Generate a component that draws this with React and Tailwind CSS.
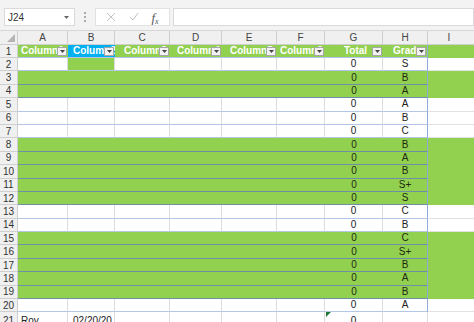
const cols = [
  { key: "A", w: "w-[50px]", pl: "pl-[3px]", label: "Column1" },
  { key: "B", w: "w-[47px]", pl: "pl-[5px]", label: "Column2" },
  { key: "C", w: "w-[55px]", pl: "pl-[9px]", label: "Column3" },
  { key: "D", w: "w-[52px]", pl: "pl-[7px]", label: "Column4" },
  { key: "E", w: "w-[55px]", pl: "pl-[8px]", label: "Column5" },
  { key: "F", w: "w-[48px]", pl: "pl-[3px]", label: "Column6" },
  { key: "G", w: "w-[58px]", pl: "pl-[19px]", label: "Total" },
  { key: "H", w: "w-[45px]", pl: "pl-[10px]", label: "Grade" },
];

const grades = ["S", "B", "A", "A", "B", "C", "B", "A", "B", "S+", "S", "C", "B", "C", "S+", "B", "A", "B", "A"];
const greenRows = [3, 4, 8, 9, 10, 11, 12, 15, 16, 17, 18, 19];

const FilterBtn = () => (
  <div className="absolute right-[1px] top-[2px] w-[10px] h-[9px] bg-[#f2f2f2] border border-[#a6a6a6] flex items-center justify-center">
    <svg width="5" height="3" viewBox="0 0 5 3">
      <path d="M0 0 L5 0 L2.5 3 Z" fill="#444" />
    </svg>
  </div>
);

const HeaderRow = () => (
  <div className="flex h-[13px]">
    <div className="w-[18px] shrink-0 bg-[#f0f0f0] border-r border-b border-[#cfcfcf] flex items-center justify-center text-[#333]">1</div>
    {cols.map((c) => (
      <div
        key={c.key}
        className={`${c.w} shrink-0 relative overflow-hidden border-b border-[#b4c6e7] ${c.key === "B" ? "bg-[#00b0f0]" : "bg-[#92d050]"} ${c.key === "H" ? "border-r border-r-[#8eaadb]" : ""}`}
      >
        <div className={`${c.pl} pr-[12px] whitespace-nowrap overflow-hidden text-white font-bold leading-[12px]`}>{c.label}</div>
        <FilterBtn />
      </div>
    ))}
    <div className="flex-1 bg-[#92d050]" />
  </div>
);

const DataRow = ({ n }) => {
  const green = greenRows.includes(n);
  const line = green ? "border-b-[#6f8fa6]" : "border-b-[#b4c6e7]";
  return (
    <div className="flex h-[13.4px]">
      <div className="w-[18px] shrink-0 bg-[#f0f0f0] border-r border-b border-[#cfcfcf] flex items-center justify-center text-[#333]">{n}</div>
      {cols.map((c) => {
        const fill = green || (n === 2 && c.key === "B") ? "bg-[#92d050]" : "bg-white";
        const vline = green ? "" : c.key === "H" ? "" : "border-r border-r-[#dcdcdc]";
        return (
          <div
            key={c.key}
            className={`${c.w} shrink-0 border-b ${line} ${fill} ${vline} ${c.key === "H" ? "border-r border-r-[#8eaadb]" : ""} flex items-center justify-center leading-none ${green ? "text-[#1e2a10]" : "text-[#222]"}`}
          >
            {c.key === "G" ? "0" : c.key === "H" ? grades[n - 2] : ""}
          </div>
        );
      })}
      <div className={`flex-1 ${green ? "bg-[#92d050]" : "bg-white border-b border-[#e2e2e2]"}`} />
    </div>
  );
};

const App = () => {
  return (
    <div className="w-[474px] h-[322px] overflow-hidden bg-white text-[10px] select-none" style={{ fontFamily: '"Liberation Sans", Arial, sans-serif' }}>
      {/* formula bar */}
      <div className="h-[31px] bg-[#f3f3f3] flex items-start pt-[8px] border-b border-[#d6d6d6]">
        <div className="ml-[4px] w-[71px] h-[18px] bg-white border border-[#dadada] flex items-center justify-between pl-[3px] pr-[5px] text-[#333]">
          <span>J24</span>
          <svg width="5" height="3" viewBox="0 0 5 3">
            <path d="M0 0 L5 0 L2.5 3 Z" fill="#666" />
          </svg>
        </div>
        <div className="w-[20px] h-[18px] flex flex-col items-center justify-center gap-[2px]">
          <div className="w-[2px] h-[2px] bg-[#aaa]" />
          <div className="w-[2px] h-[2px] bg-[#aaa]" />
          <div className="w-[2px] h-[2px] bg-[#aaa]" />
        </div>
        <div className="w-[75px] h-[18px] bg-white border border-[#e2e2e2] flex items-center justify-around px-[4px]">
          <svg width="10" height="10" viewBox="0 0 10 10">
            <path d="M1 1 L9 9 M9 1 L1 9" stroke="#c2c2c2" strokeWidth="1" />
          </svg>
          <svg width="10" height="10" viewBox="0 0 10 10">
            <path d="M1 5 L4 8 L9 1" stroke="#c2c2c2" strokeWidth="1" fill="none" />
          </svg>
          <span className="italic text-[#555] text-[13px] leading-none" style={{ fontFamily: '"Liberation Serif", serif' }}>
            f<sub className="text-[8px]">x</sub>
          </span>
        </div>
        <div className="ml-[3px] flex-1 h-[18px] bg-white border border-[#dadada]" />
      </div>

      {/* column letters */}
      <div className="flex h-[14px] bg-[#f0f0f0] text-[#444]">
        <div className="w-[18px] shrink-0 border-r border-b border-[#cfcfcf] relative">
          <svg className="absolute right-[2px] bottom-[2px]" width="8" height="8" viewBox="0 0 8 8">
            <path d="M8 0 L8 8 L0 8 Z" fill="#b4b4b4" />
          </svg>
        </div>
        {cols.map((c) => (
          <div key={c.key} className={`${c.w} shrink-0 border-r border-b border-[#cfcfcf] flex items-center justify-center`}>
            {c.key}
          </div>
        ))}
        <div className="flex-1 border-b border-[#cfcfcf] flex items-center justify-center pr-[4px]">I</div>
      </div>

      <HeaderRow />
      {Array.from({ length: 19 }, (_, i) => (
        <DataRow key={i} n={i + 2} />
      ))}

      {/* row 21, cut off by the window */}
      <div className="flex h-[14px]">
        <div className="w-[18px] shrink-0 bg-[#f0f0f0] border-r border-[#cfcfcf] flex items-start justify-center text-[#333] pt-[1px]">21</div>
        {cols.map((c) => (
          <div key={c.key} className={`${c.w} shrink-0 border-r border-[#dcdcdc] relative text-[#222] pt-[1px] ${c.key === "A" ? "pl-[3px]" : c.key === "B" ? "pl-[5px]" : "text-center"}`}>
            {c.key === "A" ? "Roy" : c.key === "B" ? "02/20/20" : c.key === "G" ? "0" : ""}
            {c.key === "G" && (
              <svg className="absolute left-[1px] top-0" width="5" height="5" viewBox="0 0 5 5">
                <path d="M0 0 L5 0 L0 5 Z" fill="#1e7a3a" />
              </svg>
            )}
          </div>
        ))}
        <div className="flex-1" />
      </div>
    </div>
  );
};

export default App;
